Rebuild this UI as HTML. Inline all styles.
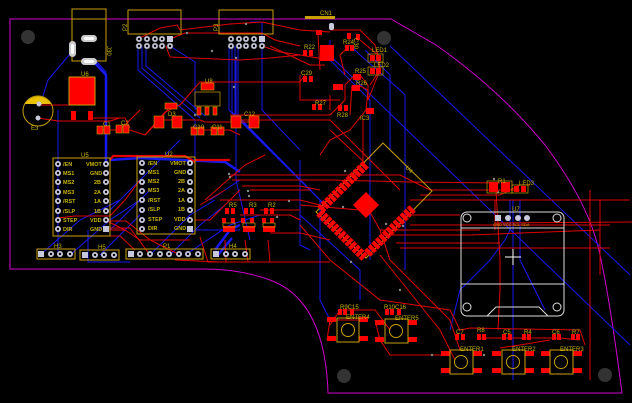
<!DOCTYPE html>
<html><head><meta charset="utf-8"><style>
html,body{margin:0;padding:0;background:#000;width:632px;height:403px;overflow:hidden}
svg{display:block}
text{font-family:"Liberation Sans",sans-serif;fill:#c8b400}
.lab{font-size:6px}
.pin{font-size:5.5px;font-weight:bold;fill:#e8d000}
</style></head><body>
<svg width="632" height="403" viewBox="0 0 632 403" xmlns="http://www.w3.org/2000/svg">
<rect width="632" height="403" fill="#000"/>
<path d="M10,19 L391,19 L436,45 Q500,90 545,145 Q590,205 600,255 Q610,300 622,393 L328,393 Q325,300 270,280 Q240,269 205,269 L10,269 Z" fill="none" stroke="#d000d0" stroke-width="1"/>
<g fill="#333"><circle cx="28" cy="37" r="7"/><circle cx="384" cy="38" r="7"/><circle cx="344" cy="376" r="7"/><circle cx="605" cy="375" r="7"/></g>

<g fill="none" stroke="#1818f0" stroke-width="1">
<path d="M96,61 L106,72 L106,160"/>
<path d="M75,48 L48,80 L40,105"/>
<path d="M58,110 L58,255"/>
<path d="M138,46 L138,70 L195,120 L195,160"/>
<path d="M142,46 L142,68 L200,118"/>
<path d="M146,46 L146,66 L205,116"/>
<path d="M170,46 L195,62 L195,110"/>
<path d="M229,46 L229,110 L320,200 L320,300 L330,320"/>
<path d="M232,46 L232,112 L322,202"/>
<path d="M235,46 L235,114 L324,204"/>
<path d="M238,46 L238,116 L326,206"/>
<path d="M250,22 L262,22 L262,110 L300,150"/>
<path d="M330,40 L330,60 L360,90 L370,100 L370,260"/>
<path d="M350,45 L360,55 L400,90 L405,95 L405,270"/>
<path d="M365,50 L390,75 L390,150"/>
<path d="M390,46 L630,275"/>
<path d="M320,46 L630,345"/>
<path d="M510,200 L510,230 L505,240 L490,260 L460,290 L450,330"/>
<path d="M513,200 L513,380"/>
<path d="M520,200 L520,260 L545,310"/>
<path d="M110,210 L140,180 L180,140"/>
<path d="M110,230 L150,190"/>
<path d="M40,255 L80,220 L120,200"/>
<path d="M70,255 L110,220 L140,200"/>
<path d="M100,255 L140,215"/>
<path d="M150,255 L190,215 L215,200"/>
<path d="M170,255 L200,225 L225,205"/>
<path d="M185,255 L230,225 L260,215"/>
<path d="M195,230 L240,230"/>
<path d="M210,200 L240,180 L300,180"/>
<path d="M88,230 L88,262 L130,262"/>
<path d="M236,60 L236,180 L250,240"/>
<path d="M300,215 L360,270 L360,300"/>
<path d="M300,160 L300,245 L310,250"/>
</g>
<g fill="none" stroke="#1818f0" stroke-width="2.5">
<path d="M94,62 L106,75 L106,165"/>
<path d="M215,250 L230,230 L240,225"/>
<path d="M218,255 L232,238"/>
<path d="M110,160 L140,158 L225,162 L240,172"/>
</g>

<g fill="none" stroke="#e00000" stroke-width="1">
<path d="M138,39 L160,28 L177,25 L180,30 L230,24 L262,22 L300,30 L330,32"/>
<path d="M170,39 L185,33 L230,33 L262,33 L275,40 L300,46"/>
<path d="M166,46 L170,57 L240,60 L270,58 L300,55"/>
<path d="M262,46 L280,52 L300,55 L330,60"/>
<path d="M270,46 L310,65 L325,65"/>
<path d="M200,82 L215,82 L230,82 L300,82 L305,75"/>
<path d="M180,105 L200,82"/>
<path d="M38,105 L70,105"/>
<path d="M38,118 L58,121 L110,121 L120,118"/>
<path d="M92,118 L125,118 L130,128"/>
<path d="M100,130 L130,130 L145,135 L160,120 L170,106"/>
<path d="M180,105 L165,112 L145,135"/>
<path d="M120,130 L140,110"/>
<path d="M230,115 L330,115 L345,100 L345,85 L355,75"/>
<path d="M230,120 L275,120 L330,120 L360,150 L400,190"/>
<path d="M160,120 L200,120 L205,122 L260,122"/>
<path d="M200,130 L230,130 L240,135"/>
<path d="M58,218 L75,216 L110,216 L125,200 L140,180"/>
<path d="M110,230 L125,230 L140,240 L190,240"/>
<path d="M105,220 L125,230"/>
<path d="M56,236 L70,236 L120,236 L135,250"/>
<path d="M106,228 L130,228 L150,255"/>
<path d="M110,221 L126,221 L150,240 L180,255"/>
<path d="M200,237 L208,262 L330,262"/>
<path d="M175,260 L220,262 L300,262"/>
<path d="M195,220 L210,220 L240,190"/>
<path d="M230,175 L330,175 L400,175 L430,190 L520,190"/>
<path d="M232,180 L330,180 L410,182 L500,183"/>
<path d="M242,186 L300,186 L320,190"/>
<path d="M250,190 L310,190"/>
<path d="M220,200 L300,200 L320,205"/>
<path d="M300,205 L360,210"/>
<path d="M240,215 L290,215 L300,220"/>
<path d="M260,210 L300,210"/>
<path d="M205,200 L230,178 L245,165 L265,155"/>
<path d="M200,205 L225,190"/>
<path d="M270,233 L300,233 L330,240"/>
<path d="M268,240 L270,262"/>
<path d="M245,240 L248,262"/>
<path d="M225,240 L226,262"/>
<path d="M380,230 L480,230"/>
<path d="M400,215 L460,215"/>
<path d="M410,200 L630,200"/>
<path d="M420,195 L500,195 L520,185 L530,185"/>
<path d="M410,225 L610,225"/>
<path d="M380,235 L470,235 L600,230"/>
<path d="M396,243 L500,243"/>
<path d="M300,225 L330,260 L380,300 L450,310 L460,330"/>
<path d="M380,255 L400,280 L440,330 L455,360"/>
<path d="M366,205 L380,230 L390,260 L450,320 L460,350"/>
<path d="M330,325 L340,310 L375,310 L390,330"/>
<path d="M327,340 L330,320 L360,320"/>
<path d="M375,320 L380,340 L390,355 L445,355"/>
<path d="M460,330 L470,328 L580,330 L585,345"/>
<path d="M480,338 L560,338 L580,340"/>
<path d="M500,348 L520,345 L550,340"/>
<path d="M350,45 L340,55 L345,75"/>
<path d="M360,75 L368,85 L368,100 L380,70"/>
<path d="M360,86 L368,90 L366,110 L350,130 L330,140 L320,155"/>
<path d="M300,75 L300,100 L340,100"/>
<path d="M330,95 L330,110"/>
<path d="M363,120 L363,165"/>
<path d="M330,30 L360,30 L375,45 L378,55"/>
<path d="M360,40 L378,55 L380,70 L370,85"/>
<path d="M352,85 L350,115"/>
<path d="M318,35 L320,70"/>
<path d="M330,130 L365,163"/>
<path d="M496,190 L500,260 L500,290 L498,330"/>
<path d="M495,223 L640,222"/>
<path d="M400,248 L610,248"/>
<path d="M495,200 L495,230"/>
<path d="M600,275 L600,200"/>
<path d="M590,190 L590,380"/>
</g>
<g fill="none" stroke="#e00000" stroke-width="2.2">
<path d="M110,160 L113,156 L185,156 L195,162"/>
<path d="M195,160 L230,160"/>
</g>

<g fill="#888">
<circle cx="187" cy="33" r="1.2"/><circle cx="246" cy="24" r="1.2"/><circle cx="236" cy="58" r="1.2"/><circle cx="234" cy="87" r="1.2"/><circle cx="195" cy="115" r="1.2"/><circle cx="229" cy="174" r="1.2"/><circle cx="230" cy="177" r="1.2"/><circle cx="248" cy="191" r="1.2"/><circle cx="249" cy="196" r="1.2"/><circle cx="289" cy="201" r="1.2"/><circle cx="277" cy="217" r="1.2"/><circle cx="345" cy="171" r="1.2"/><circle cx="343" cy="207" r="1.2"/><circle cx="386" cy="224" r="1.2"/><circle cx="388" cy="229" r="1.2"/><circle cx="403" cy="226" r="1.2"/><circle cx="351" cy="262" r="1.2"/><circle cx="494" cy="179" r="1.2"/><circle cx="498" cy="192" r="1.2"/><circle cx="400" cy="290" r="1.2"/><circle cx="484" cy="355" r="1.2"/><circle cx="432" cy="355" r="1.2"/><circle cx="212" cy="51" r="1.2"/>
</g>

<rect x="72" y="9" width="34" height="52" fill="none" stroke="#c8a000" stroke-width="1"/>
<line x1="72" y1="19" x2="106" y2="19" stroke="#c8a000"/>
<rect x="81" y="35" width="16" height="7" rx="3.5" fill="#ccc"/><rect x="84" y="37" width="10" height="3" rx="1.5" fill="#fff"/>
<rect x="69" y="41" width="7" height="16" rx="3.5" fill="#ccc"/><rect x="71" y="44" width="3" height="10" rx="1.5" fill="#fff"/>
<rect x="81" y="58" width="16" height="7" rx="3.5" fill="#ccc"/><rect x="84" y="60" width="10" height="3" rx="1.5" fill="#fff"/>
<text class="lab" x="107" y="46" transform="rotate(90 107 46)">J30</text>
<rect x="128" y="10" width="53" height="24" fill="none" stroke="#c8a000"/>
<text class="lab" x="127" y="31" transform="rotate(-90 127 31)">P2</text>
<rect x="219" y="10" width="54" height="24" fill="none" stroke="#c8a000"/>
<text class="lab" x="218" y="31" transform="rotate(-90 218 31)">P3</text>
<g fill="#c8c8dc" stroke="#666" stroke-width="0.5">
<circle cx="139" cy="39" r="3"/><circle cx="147" cy="39" r="3"/><circle cx="155" cy="39" r="3"/><circle cx="162" cy="39" r="3"/>
<circle cx="139" cy="46" r="3"/><circle cx="147" cy="46" r="3"/><circle cx="155" cy="46" r="3"/><circle cx="162" cy="46" r="3"/><circle cx="170" cy="46" r="3"/>
<circle cx="231" cy="39" r="3"/><circle cx="239" cy="39" r="3"/><circle cx="246" cy="39" r="3"/><circle cx="254" cy="39" r="3"/>
<circle cx="231" cy="46" r="3"/><circle cx="239" cy="46" r="3"/><circle cx="246" cy="46" r="3"/><circle cx="254" cy="46" r="3"/><circle cx="262" cy="46" r="3"/>
</g>
<rect x="167" y="36" width="6" height="6" fill="#c8c8dc"/><rect x="259" y="36" width="6" height="6" fill="#c8c8dc"/>
<g fill="#000"><circle cx="139" cy="39" r="1.2"/><circle cx="147" cy="39" r="1.2"/><circle cx="155" cy="39" r="1.2"/><circle cx="162" cy="39" r="1.2"/><circle cx="139" cy="46" r="1.2"/><circle cx="147" cy="46" r="1.2"/><circle cx="155" cy="46" r="1.2"/><circle cx="162" cy="46" r="1.2"/><circle cx="170" cy="46" r="1.2"/><circle cx="231" cy="39" r="1.2"/><circle cx="239" cy="39" r="1.2"/><circle cx="246" cy="39" r="1.2"/><circle cx="254" cy="39" r="1.2"/><circle cx="231" cy="46" r="1.2"/><circle cx="239" cy="46" r="1.2"/><circle cx="246" cy="46" r="1.2"/><circle cx="254" cy="46" r="1.2"/><circle cx="262" cy="46" r="1.2"/></g>

<rect x="69" y="77" width="26" height="28" fill="#f00" stroke="#c8a000"/>
<text class="lab" x="81" y="76">U6</text>
<rect x="71" y="111" width="5" height="9" fill="#f00"/><rect x="88" y="111" width="5" height="9" fill="#f00"/>
<circle cx="38" cy="111" r="15" fill="none" stroke="#c8a000"/>
<path d="M25,104 A15,15 0 0 1 51,104 Z" fill="#e8c000"/>
<circle cx="39" cy="104" r="2.5" fill="#c8c8dc"/><circle cx="38" cy="118" r="2.5" fill="#c8c8dc"/>
<text class="lab" x="31" y="130">E3</text>
<g fill="#f00" stroke="#c8a000" stroke-width="0.6">
<rect x="97" y="126" width="6" height="8"/><rect x="104" y="126" width="6" height="8"/>
<rect x="116" y="125" width="6" height="8"/><rect x="123" y="125" width="6" height="8"/>
<rect x="154" y="116" width="10" height="12"/><rect x="172" y="116" width="10" height="12"/>
<rect x="231" y="116" width="10" height="12"/><rect x="249" y="116" width="10" height="12"/>
<rect x="191" y="127" width="6" height="8"/><rect x="198" y="127" width="6" height="8"/>
<rect x="211" y="127" width="6" height="8"/><rect x="218" y="127" width="6" height="8"/>
<rect x="201" y="83" width="13" height="7"/>
<rect x="197" y="107" width="4" height="8"/><rect x="205" y="107" width="4" height="8"/><rect x="213" y="107" width="4" height="8"/>
<rect x="165" y="103" width="12" height="6"/>
</g>
<rect x="195" y="92" width="25" height="14" fill="none" stroke="#c8a000" stroke-width="0.7"/>
<text class="lab" x="103" y="126">C1</text><text class="lab" x="121" y="125">C2</text>
<text class="lab" x="205" y="83">U8</text><text class="lab" x="168" y="116">D3</text>
<text class="lab" x="244" y="116">C12</text><text class="lab" x="193" y="129">C10</text><text class="lab" x="212" y="129">C11</text>

<rect x="53" y="158" width="57" height="78" fill="none" stroke="#c8a000"/>
<text class="lab" x="81" y="157">U5</text>
<g class="pin">
<text x="63" y="166">/EN</text><text x="63" y="175">MS1</text><text x="63" y="184">MS2</text><text x="63" y="194">MS3</text><text x="63" y="203">/RST</text><text x="63" y="213">/SLP</text><text x="63" y="222">STEP</text><text x="63" y="231">DIR</text>
<text x="86" y="166">VMOT</text><text x="90" y="175">GND</text><text x="94" y="184">2B</text><text x="94" y="194">2A</text><text x="94" y="203">1A</text><text x="94" y="213">1B</text><text x="90" y="222">VDD</text><text x="90" y="231">GND</text>
</g>
<g fill="#c8c8dc">
<circle cx="58" cy="164" r="3"/><circle cx="58" cy="173" r="3"/><circle cx="58" cy="182" r="3"/><circle cx="58" cy="192" r="3"/><circle cx="58" cy="201" r="3"/><circle cx="58" cy="211" r="3"/><circle cx="58" cy="220" r="3"/><circle cx="58" cy="229" r="3"/>
<circle cx="106" cy="164" r="3"/><circle cx="106" cy="173" r="3"/><circle cx="106" cy="182" r="3"/><circle cx="106" cy="192" r="3"/><circle cx="106" cy="201" r="3"/><circle cx="106" cy="211" r="3"/><circle cx="106" cy="220" r="3"/><rect x="103" y="226" width="6" height="6"/>
</g>
<rect x="137" y="157" width="58" height="77" fill="none" stroke="#c8a000"/>
<text class="lab" x="165" y="156">U2</text>
<g class="pin">
<text x="148" y="165">/EN</text><text x="148" y="174">MS1</text><text x="148" y="183">MS2</text><text x="148" y="192">MS3</text><text x="148" y="202">/RST</text><text x="148" y="211">/SLP</text><text x="148" y="221">STEP</text><text x="148" y="230">DIR</text>
<text x="170" y="165">VMOT</text><text x="174" y="174">GND</text><text x="178" y="183">2B</text><text x="178" y="192">2A</text><text x="178" y="202">1A</text><text x="178" y="211">1B</text><text x="174" y="221">VDD</text><text x="174" y="230">GND</text>
</g>
<g fill="#c8c8dc">
<circle cx="142" cy="163" r="3"/><circle cx="142" cy="172" r="3"/><circle cx="142" cy="182" r="3"/><circle cx="142" cy="191" r="3"/><circle cx="142" cy="200" r="3"/><circle cx="142" cy="210" r="3"/><circle cx="142" cy="220" r="3"/><circle cx="142" cy="229" r="3"/>
<circle cx="190" cy="163" r="3"/><circle cx="190" cy="172" r="3"/><circle cx="190" cy="182" r="3"/><circle cx="190" cy="191" r="3"/><circle cx="190" cy="200" r="3"/><circle cx="190" cy="210" r="3"/><circle cx="190" cy="220" r="3"/><rect x="187" y="226" width="6" height="6"/>
</g>
<g fill="#000">
<circle cx="58" cy="164" r="1.2"/><circle cx="58" cy="173" r="1.2"/><circle cx="58" cy="182" r="1.2"/><circle cx="58" cy="192" r="1.2"/><circle cx="58" cy="201" r="1.2"/><circle cx="58" cy="211" r="1.2"/><circle cx="58" cy="220" r="1.2"/><circle cx="58" cy="229" r="1.2"/>
<circle cx="106" cy="164" r="1.2"/><circle cx="106" cy="173" r="1.2"/><circle cx="106" cy="182" r="1.2"/><circle cx="106" cy="192" r="1.2"/><circle cx="106" cy="201" r="1.2"/><circle cx="106" cy="211" r="1.2"/><circle cx="106" cy="220" r="1.2"/>
<circle cx="142" cy="163" r="1.2"/><circle cx="142" cy="172" r="1.2"/><circle cx="142" cy="182" r="1.2"/><circle cx="142" cy="191" r="1.2"/><circle cx="142" cy="200" r="1.2"/><circle cx="142" cy="210" r="1.2"/><circle cx="142" cy="220" r="1.2"/><circle cx="142" cy="229" r="1.2"/>
<circle cx="190" cy="163" r="1.2"/><circle cx="190" cy="172" r="1.2"/><circle cx="190" cy="182" r="1.2"/><circle cx="190" cy="191" r="1.2"/><circle cx="190" cy="200" r="1.2"/><circle cx="190" cy="210" r="1.2"/><circle cx="190" cy="220" r="1.2"/>
</g>

<g fill="none" stroke="#c8a000">
<rect x="37" y="249" width="38" height="10"/><rect x="80" y="250" width="39" height="10"/><rect x="126" y="249" width="77" height="10"/><rect x="211" y="249" width="39" height="10"/>
</g>
<text class="lab" x="54" y="248">H3</text><text class="lab" x="98" y="249">H5</text><text class="lab" x="163" y="248">P1</text><text class="lab" x="229" y="248">H4</text>
<g fill="#c8c8dc">
<rect x="38" y="251" width="6" height="6"/><circle cx="51" cy="254" r="3"/><circle cx="60" cy="254" r="3"/><circle cx="70" cy="254" r="3"/>
<rect x="82" y="252" width="6" height="6"/><circle cx="95" cy="255" r="3"/><circle cx="104" cy="255" r="3"/><circle cx="114" cy="255" r="3"/>
<rect x="128" y="251" width="6" height="6"/><circle cx="140" cy="254" r="3"/><circle cx="150" cy="254" r="3"/><circle cx="160" cy="254" r="3"/><circle cx="169" cy="254" r="3"/><circle cx="179" cy="254" r="3"/><circle cx="188" cy="254" r="3"/><circle cx="198" cy="254" r="3"/>
<rect x="213" y="251" width="6" height="6"/><circle cx="226" cy="254" r="3"/><circle cx="235" cy="254" r="3"/><circle cx="245" cy="254" r="3"/>
</g>
<g fill="#000">
<circle cx="51" cy="254" r="1.2"/><circle cx="60" cy="254" r="1.2"/><circle cx="70" cy="254" r="1.2"/><circle cx="95" cy="255" r="1.2"/><circle cx="104" cy="255" r="1.2"/><circle cx="114" cy="255" r="1.2"/><circle cx="140" cy="254" r="1.2"/><circle cx="150" cy="254" r="1.2"/><circle cx="160" cy="254" r="1.2"/><circle cx="169" cy="254" r="1.2"/><circle cx="179" cy="254" r="1.2"/><circle cx="188" cy="254" r="1.2"/><circle cx="198" cy="254" r="1.2"/><circle cx="226" cy="254" r="1.2"/><circle cx="235" cy="254" r="1.2"/><circle cx="245" cy="254" r="1.2"/>
</g>

<g fill="#f00">
<rect x="225" y="208" width="4" height="6"/><rect x="231" y="208" width="4" height="6"/>
<rect x="244" y="208" width="4" height="6"/><rect x="250" y="208" width="4" height="6"/>
<rect x="264" y="208" width="4" height="6"/><rect x="270" y="208" width="4" height="6"/>
<rect x="222" y="218" width="4" height="5"/><rect x="231" y="218" width="4" height="5"/><rect x="223" y="226" width="12" height="6"/>
<rect x="241" y="218" width="4" height="5"/><rect x="250" y="218" width="4" height="5"/><rect x="243" y="226" width="12" height="6"/>
<rect x="262" y="218" width="4" height="5"/><rect x="270" y="218" width="4" height="5"/><rect x="263" y="226" width="12" height="6"/>
</g>
<g fill="none" stroke="#c8a000" stroke-width="0.7"><rect x="223" y="223" width="12" height="4"/><rect x="243" y="223" width="12" height="4"/><rect x="263" y="223" width="12" height="4"/></g>
<text class="lab" x="229" y="207">R5</text><text class="lab" x="249" y="207">R3</text><text class="lab" x="268" y="207">R2</text>

<rect x="305" y="16" width="30" height="3" fill="#c8a000"/>
<text class="lab" x="320" y="15">CN1</text>
<rect x="329" y="23" width="5" height="7" rx="2" fill="#c8c8dc"/>
<rect x="320" y="45" width="14" height="16" fill="#f00"/>
<g fill="#f00"><rect x="316" y="30" width="6" height="5"/><rect x="303" y="50" width="4" height="6"/><rect x="309" y="50" width="4" height="6"/>
<rect x="345" y="45" width="4" height="6"/><rect x="350" y="45" width="4" height="6"/>
<rect x="347" y="33" width="4" height="6"/><rect x="356" y="34" width="4" height="6"/>
<rect x="303" y="76" width="4" height="6"/><rect x="309" y="76" width="4" height="6"/>
<rect x="312" y="104" width="4" height="6"/><rect x="318" y="104" width="4" height="6"/>
<rect x="338" y="105" width="4" height="6"/><rect x="344" y="105" width="4" height="6"/>
<rect x="366" y="108" width="4" height="6"/><rect x="370" y="108" width="4" height="6"/>
<rect x="353" y="74" width="4" height="6"/><rect x="357" y="74" width="4" height="6"/>
<rect x="352" y="85" width="4" height="6"/><rect x="356" y="85" width="4" height="6"/>
<rect x="370" y="55" width="5" height="6"/><rect x="376" y="55" width="5" height="6"/>
<rect x="370" y="68" width="5" height="6"/><rect x="376" y="68" width="5" height="6"/>
<rect x="333" y="84" width="10" height="6"/>
<rect x="489" y="182" width="9" height="10"/><rect x="501" y="182" width="9" height="10"/>
<rect x="514" y="186" width="5" height="6"/><rect x="521" y="186" width="5" height="6"/>
</g>
<g fill="none" stroke="#c8a000" stroke-width="0.7"><rect x="368" y="54" width="15" height="8"/><rect x="368" y="67" width="15" height="8"/><rect x="487" y="181" width="25" height="12"/><rect x="512" y="185" width="16" height="8"/></g>
<g class="lab"><text x="304" y="49">R22</text><text x="301" y="75">C29</text><text x="343" y="44">R24</text><text x="372" y="52">LED1</text><text x="374" y="67">LED2</text><text x="355" y="73">R25</text><text x="356" y="85">R26</text><text x="315" y="105">R27</text><text x="337" y="117">R28</text><text x="360" y="120">IC3</text><text x="498" y="183">R1</text><text x="519" y="185">LED3</text><text x="354" y="38" transform="rotate(90 354 38)">C30</text></g>

<polygon points="383,143 432,191 366,258 316,212" fill="none" stroke="#c8a000" stroke-width="1"/>
<polygon points="366,192 379,205 366,218 353,205" fill="#f00"/>
<defs>
<g id="pr"><rect x="-32" y="-4.5" width="4" height="9"/><rect x="-27" y="-4.5" width="4" height="9"/><rect x="-22" y="-4.5" width="4" height="9"/><rect x="-17" y="-4.5" width="4" height="9"/><rect x="-12" y="-4.5" width="4" height="9"/><rect x="-7" y="-4.5" width="4" height="9"/><rect x="-2" y="-4.5" width="4" height="9"/><rect x="3" y="-4.5" width="4" height="9"/><rect x="8" y="-4.5" width="4" height="9"/><rect x="13" y="-4.5" width="4" height="9"/><rect x="18" y="-4.5" width="4" height="9"/><rect x="23" y="-4.5" width="4" height="9"/><rect x="28" y="-4.5" width="4" height="9"/></g>
</defs>
<g fill="#f00">
<use href="#pr" transform="translate(343,187) rotate(-45)"/>
<use href="#pr" transform="translate(342,235) rotate(45)"/>
<use href="#pr" transform="translate(390,231) rotate(-45)"/>
</g>
<text class="lab" x="405" y="168" transform="rotate(45 405 168)">U4</text>

<rect x="461" y="212" width="103" height="104" rx="6" fill="none" stroke="#ddd" stroke-width="1"/>
<line x1="461" y1="228" x2="564" y2="228" stroke="#ddd"/><line x1="461" y1="284" x2="564" y2="284" stroke="#ddd"/>
<path d="M487,316 L496,307 L539,307 L548,316" fill="none" stroke="#ddd"/>
<g fill="none" stroke="#ddd"><circle cx="467" cy="218" r="4"/><circle cx="557" cy="218" r="4"/><circle cx="467" cy="307" r="4"/><circle cx="557" cy="307" r="4"/></g>
<line x1="505" y1="257" x2="521" y2="257" stroke="#fff"/><line x1="513" y1="249" x2="513" y2="265" stroke="#fff"/>
<rect x="495" y="215" width="6" height="6" fill="#c8c8dc"/><circle cx="508" cy="218" r="3" fill="#c8c8dc"/><circle cx="518" cy="218" r="3" fill="#c8c8dc"/><circle cx="527" cy="218" r="3" fill="#c8c8dc"/>
<text style="font-size:4px" x="493" y="226">GND VCC SCL SDA</text>
<text class="lab" x="512" y="211">U7</text>

<g fill="#f00">
<rect x="327" y="317" width="9" height="5"/><rect x="359" y="317" width="9" height="5"/><rect x="327" y="336" width="9" height="5"/><rect x="359" y="336" width="9" height="5"/>
<rect x="375" y="320" width="9" height="5"/><rect x="408" y="320" width="9" height="5"/><rect x="375" y="337" width="9" height="5"/><rect x="408" y="337" width="9" height="5"/>
<rect x="441" y="351" width="9" height="5"/><rect x="473" y="351" width="9" height="5"/><rect x="441" y="368" width="9" height="5"/><rect x="473" y="368" width="9" height="5"/>
<rect x="492" y="351" width="9" height="5"/><rect x="525" y="351" width="9" height="5"/><rect x="492" y="368" width="9" height="5"/><rect x="525" y="368" width="9" height="5"/>
<rect x="541" y="351" width="9" height="5"/><rect x="573" y="351" width="9" height="5"/><rect x="541" y="368" width="9" height="5"/><rect x="573" y="368" width="9" height="5"/>
<rect x="338" y="309" width="4" height="6"/><rect x="343" y="309" width="4" height="6"/><rect x="350" y="309" width="4" height="6"/>
<rect x="385" y="309" width="4" height="6"/><rect x="390" y="309" width="4" height="6"/><rect x="397" y="309" width="4" height="6"/>
<rect x="455" y="334" width="4" height="6"/><rect x="461" y="334" width="4" height="6"/><rect x="477" y="334" width="4" height="6"/><rect x="482" y="334" width="4" height="6"/>
<rect x="502" y="334" width="4" height="6"/><rect x="508" y="334" width="4" height="6"/><rect x="522" y="334" width="4" height="6"/><rect x="527" y="334" width="4" height="6"/>
<rect x="552" y="334" width="4" height="6"/><rect x="557" y="334" width="4" height="6"/><rect x="571" y="334" width="4" height="6"/><rect x="576" y="334" width="4" height="6"/>
</g>
<g fill="none" stroke="#c8a000">
<rect x="337" y="318" width="22" height="24"/><circle cx="348" cy="330" r="6.5"/>
<rect x="385" y="319" width="23" height="24"/><circle cx="396" cy="331" r="6.5"/>
<rect x="450" y="350" width="23" height="24"/><circle cx="461" cy="362" r="6.5"/>
<rect x="502" y="350" width="23" height="24"/><circle cx="513" cy="362" r="6.5"/>
<rect x="550" y="350" width="23" height="24"/><circle cx="561" cy="362" r="6.5"/>
</g>
<g class="lab"><text x="340" y="309">R9C15</text><text x="346" y="319">ENTER4</text><text x="384" y="309">R10C16</text><text x="395" y="320">ENTER5</text><text x="460" y="351">ENTER1</text><text x="512" y="351">ENTER2</text><text x="560" y="351">ENTER3</text><text x="456" y="334">C7</text><text x="477" y="332">R8</text><text x="503" y="334">C5</text><text x="524" y="334">R4</text><text x="552" y="334">C6</text><text x="572" y="334">R7</text></g>
</svg>
</body></html>
